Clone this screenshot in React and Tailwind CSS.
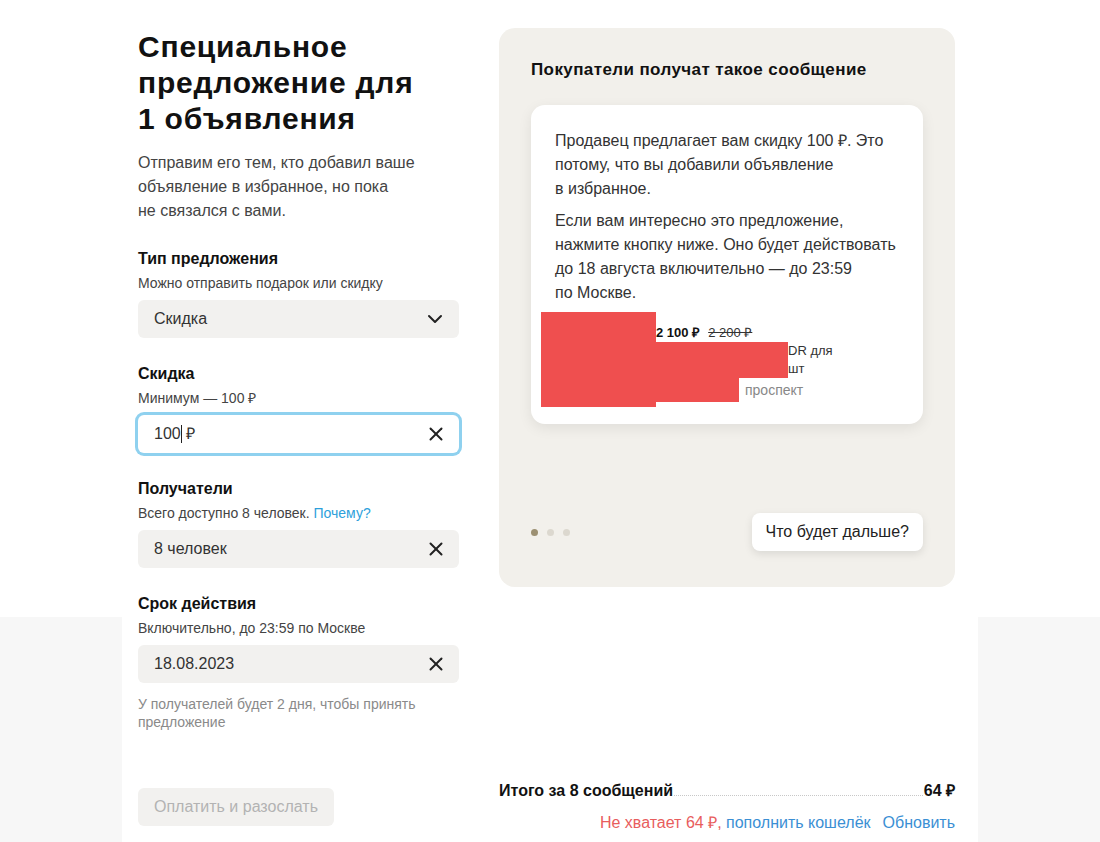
import React from "react";
import { ChevronDown, X } from "lucide-react";

function Field({ label, hint, children }) {
  return (
    <div className="mt-[26px]">
      <div className="text-[16px] leading-5 font-bold text-[#111]">{label}</div>
      <div className="mt-1 text-[14px] leading-5 text-[#444]">{hint}</div>
      <div className="mt-[7px]">{children}</div>
    </div>
  );
}

function Input({ value, focused, icon }) {
  return (
    <div
      className={`h-[38px] w-full rounded-md flex items-center justify-between pl-4 pr-[12px] text-[16px] text-[#333] ${
        focused ? "bg-white ring-[3px] ring-[#8fd1ef]" : "bg-[#f2f1ef]"
      }`}
    >
      <span className="flex items-center">{value}</span>
      {icon === "chevron" ? (
        <ChevronDown size={24} strokeWidth={2} color="#222" />
      ) : (
        <X size={22} strokeWidth={2.2} color="#222" />
      )}
    </div>
  );
}

export default function App() {
  return (
    <div className="min-h-[842px] bg-[linear-gradient(to_bottom,#ffffff_617px,#f7f7f7_617px)] font-['Liberation_Sans',Arial,sans-serif]">
      <div className="w-[856px] mx-auto bg-white min-h-[842px] pl-4 pt-[29px]">
        <div className="flex gap-10">
          {/* Form */}
          <div className="w-[321px]">
            <h1 className="text-[30px] leading-9 font-bold tracking-[0.8px] text-[#111]">
              Специальное
              <br />
              предложение для
              <br />1 объявления
            </h1>
            <p className="mt-[14px] text-[16px] leading-6 text-[#444]">
              Отправим его тем, кто добавил ваше
              <br />
              объявление в избранное, но пока
              <br />
              не связался с вами.
            </p>

            <Field label="Тип предложения" hint="Можно отправить подарок или скидку">
              <Input value="Скидка" icon="chevron" />
            </Field>

            <Field label="Скидка" hint="Минимум — 100 ₽">
              <Input
                focused
                value={
                  <>
                    100
                    <span className="inline-block w-px h-[18px] bg-[#222]" />
                    <span className="ml-1">₽</span>
                  </>
                }
              />
            </Field>

            <Field
              label="Получатели"
              hint={
                <>
                  Всего доступно 8 человек.{" "}
                  <span className="text-[#2d9fdb]">Почему?</span>
                </>
              }
            >
              <Input value="8  человек" />
            </Field>

            <Field label="Срок действия" hint="Включительно, до 23:59 по Москве">
              <Input value="18.08.2023" />
            </Field>

            <p className="mt-[12px] text-[14px] leading-[18px] text-[#8a8a8a]">
              У получателей будет 2 дня, чтобы принять
              <br />
              предложение
            </p>
          </div>

          {/* Preview */}
          <div className="w-[456px] h-[559px] -mt-px rounded-2xl bg-[#f2f0eb] px-8 pt-8 pb-9 flex flex-col">
            <h2 className="text-[17px] leading-5 font-bold tracking-[0.4px] text-[#111]">
              Покупатели получат такое сообщение
            </h2>
            <div className="mt-[25px] bg-white rounded-[14px] shadow-[0_4px_14px_rgba(0,0,0,0.08)] px-6 pt-6 pb-[17px] text-[16px] leading-6 text-[#333]">
              <p>
                Продавец предлагает вам скидку 100 ₽. Это
                <br />
                потому, что вы добавили объявление
                <br />в избранное.
              </p>
              <p className="mt-2">
                Если вам интересно это предложение,
                <br />
                нажмите кнопку ниже. Оно будет действовать
                <br />
                до 18 августа включительно — до 23:59
                <br />
                по Москве.
              </p>
              <div className="mt-[7px] flex">
                <div className="-ml-[14px] w-[115px] h-[95px] bg-[#ef4f4f]" />
                <div className="pt-3 text-[13px] leading-[18px]">
                  <div className="flex gap-2 font-bold text-[#111]">
                    <span>2 100 ₽</span>
                    <span className="font-normal line-through text-[#333]">2 200 ₽</span>
                  </div>
                  <div className="flex">
                    <div className="w-[132px] h-9 bg-[#ef4f4f]" />
                    <div className="text-[#333]">
                      DR для
                      <br />
                      шт
                    </div>
                  </div>
                  <div className="flex items-center">
                    <div className="w-[83px] h-6 bg-[#ef4f4f]" />
                    <span className="ml-[6px] text-[14px] text-[#888]">проспект</span>
                  </div>
                </div>
              </div>
            </div>
            <div className="mt-auto flex items-center justify-between">
              <div className="flex items-center gap-[9px]">
                <span className="w-[7px] h-[7px] rounded-full bg-[#9c9072]" />
                <span className="w-[7px] h-[7px] rounded-full bg-[#dcd8cf]" />
                <span className="w-[7px] h-[7px] rounded-full bg-[#dcd8cf]" />
              </div>
              <button className="h-[38px] px-[14px] rounded-lg bg-white text-[16px] text-[#222] shadow-[0_3px_8px_rgba(0,0,0,0.1)]">
                Что будет дальше?
              </button>
            </div>
          </div>
        </div>

        {/* Footer */}
        <div className="mt-[50px] flex gap-10 items-start">
          <div className="w-[321px]">
            <button className="mt-[7px] h-[38px] px-4 rounded-md bg-[#f2f1ef] text-[16px] text-[#b3b3b3]">
              Оплатить и разослать
            </button>
          </div>
          <div className="w-[456px]">
            <div className="flex items-baseline text-[16px] leading-5 font-bold text-[#111]">
              <span>Итого за 8 сообщений</span>
              <span className="flex-1 mx-px border-b border-dotted border-[#c8c8c8]" />
              <span>64 ₽</span>
            </div>
            <div className="mt-3 flex justify-end gap-3 text-[16px] leading-5">
              <span>
                <span className="text-[#e85d5d]">Не хватает 64 ₽,</span>{" "}
                <span className="text-[#3b8fd4]">пополнить кошелёк</span>
              </span>
              <span className="text-[#3b8fd4]">Обновить</span>
            </div>
          </div>
        </div>
      </div>
    </div>
  );
}
